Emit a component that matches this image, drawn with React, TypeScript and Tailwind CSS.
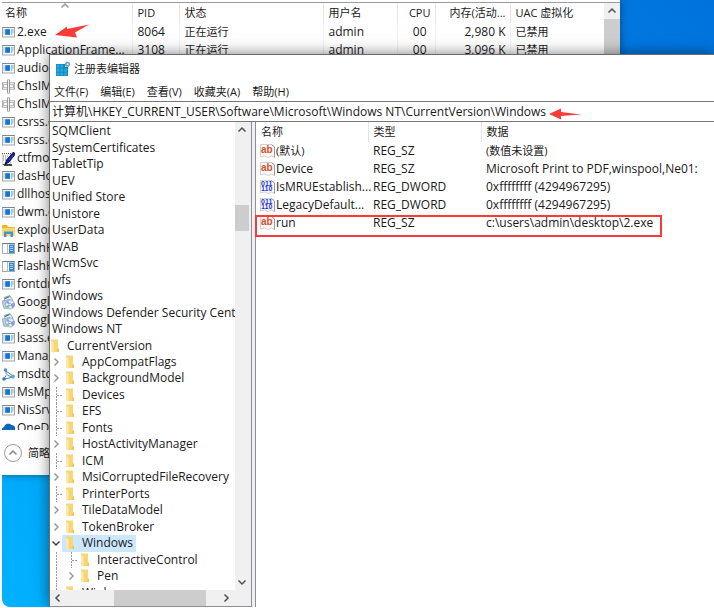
import type { ReactNode } from "react";
import clsx from "clsx";

type IconName = "app" | "ime" | "pen" | "explorer" | "flash" | "installer" | "msdtc" | "cloud";

type Process = {
  icon: IconName;
  name: string;
  pid?: string;
  status?: string;
  user?: string;
  cpu?: string;
  memory?: string;
  uac?: string;
};

const PROCESSES: Process[] = [
  { icon: "app", name: "2.exe", pid: "8064", status: "正在运行", user: "admin", cpu: "00", memory: "2,980 K", uac: "已禁用" },
  { icon: "app", name: "ApplicationFrame...", pid: "3108", status: "正在运行", user: "admin", cpu: "00", memory: "3,096 K", uac: "已禁用" },
  { icon: "app", name: "audiodg.exe" },
  { icon: "ime", name: "ChsIME.exe" },
  { icon: "ime", name: "ChsIME.exe" },
  { icon: "app", name: "csrss.exe" },
  { icon: "app", name: "csrss.exe" },
  { icon: "pen", name: "ctfmon.exe" },
  { icon: "app", name: "dasHost.exe" },
  { icon: "app", name: "dllhost.exe" },
  { icon: "app", name: "dwm.exe" },
  { icon: "explorer", name: "explorer.exe" },
  { icon: "flash", name: "FlashHelper.exe" },
  { icon: "flash", name: "FlashHelper.exe" },
  { icon: "app", name: "fontdrvhost.exe" },
  { icon: "installer", name: "GoogleUpdate.exe" },
  { icon: "installer", name: "GoogleUpdate.exe" },
  { icon: "app", name: "lsass.exe" },
  { icon: "app", name: "Management.exe" },
  { icon: "msdtc", name: "msdtc.exe" },
  { icon: "app", name: "MsMpEng.exe" },
  { icon: "app", name: "NisSrv.exe" },
  { icon: "cloud", name: "OneDrive.exe" },
];

type TreeNode = { name: string; level: 0 | 1 | 2 | 3; toggle?: "open" | "closed"; selected?: boolean };

const TREE: TreeNode[] = [
  { name: "SQMClient", level: 0 },
  { name: "SystemCertificates", level: 0 },
  { name: "TabletTip", level: 0 },
  { name: "UEV", level: 0 },
  { name: "Unified Store", level: 0 },
  { name: "Unistore", level: 0 },
  { name: "UserData", level: 0 },
  { name: "WAB", level: 0 },
  { name: "WcmSvc", level: 0 },
  { name: "wfs", level: 0 },
  { name: "Windows", level: 0 },
  { name: "Windows Defender Security Center", level: 0 },
  { name: "Windows NT", level: 0 },
  { name: "CurrentVersion", level: 1 },
  { name: "AppCompatFlags", level: 2, toggle: "closed" },
  { name: "BackgroundModel", level: 2, toggle: "closed" },
  { name: "Devices", level: 2 },
  { name: "EFS", level: 2 },
  { name: "Fonts", level: 2 },
  { name: "HostActivityManager", level: 2, toggle: "closed" },
  { name: "ICM", level: 2 },
  { name: "MsiCorruptedFileRecovery", level: 2, toggle: "closed" },
  { name: "PrinterPorts", level: 2 },
  { name: "TileDataModel", level: 2, toggle: "closed" },
  { name: "TokenBroker", level: 2, toggle: "closed" },
  { name: "Windows", level: 2, toggle: "open", selected: true },
  { name: "InteractiveControl", level: 3 },
  { name: "Pen", level: 3, toggle: "closed" },
  { name: "Winlogon", level: 2 },
];

const VALUES = [
  { name: "(默认)", type: "REG_SZ", data: "(数值未设置)" },
  { name: "Device", type: "REG_SZ", data: "Microsoft Print to PDF,winspool,Ne01:" },
  { name: "IsMRUEstablish...", type: "REG_DWORD", data: "0xffffffff (4294967295)" },
  { name: "LegacyDefault...", type: "REG_DWORD", data: "0xffffffff (4294967295)" },
  { name: "run", type: "REG_SZ", data: "c:\\users\\admin\\desktop\\2.exe" },
];

const MENU = ["文件(F)", "编辑(E)", "查看(V)", "收藏夹(A)", "帮助(H)"];

const ICONS: Record<IconName, ReactNode> = {
  app: (
    <>
      <rect x="0.500" y="2.500" width="12" height="9.500" fill="#f8f8f8" stroke="#a3a8ac" />
      <path d="M0.500 2.500h12" stroke="#7f868b" />
      <path d="M1.500 5h1M1.500 7h1M1.500 9h1" stroke="#8b8b8b" />
      <path d="M9 5h2.500M9 7h2.500M9 9h1.500" stroke="#4f93cf" />
      <rect x="3.200" y="4.200" width="4.800" height="5.600" fill="#0a78d7" />
    </>
  ),
  ime: (
    <>
      <path d="M1 4.500h11v5H1z" fill="#fff" stroke="#858585" strokeWidth="2.200" />
      <path d="M1 4.500h11v5H1z" fill="none" stroke="#f2f2f2" strokeWidth="0.900" />
      <path d="M6.500 0.500v14" stroke="#858585" strokeWidth="2.600" />
      <path d="M6.500 1v13" stroke="#f2f2f2" strokeWidth="1" />
    </>
  ),
  pen: (
    <>
      <path d="M0 2.500h9l-1 11H0z" fill="#fff" stroke="#555" strokeDasharray="1 1" />
      <path d="M1 5h6M1 7h4M1 9h4" stroke="#777" strokeDasharray="1 1" />
      <path d="M11.500 1 5 8.500 3 13l3.500-1.500L13 3.500z" fill="#1322ae" stroke="#05083f" />
      <path d="M11 4 7 9" stroke="#3850d5" />
      <path d="M2 14h8" stroke="#111" strokeWidth="1.500" />
    </>
  ),
  explorer: (
    <>
      <path d="M0 2h5l1 2h7v9H0z" fill="#efb530" />
      <path d="M0 5h13v8H0z" fill="#ffd667" />
      <path d="M2 14V8.500h9V14H8.500v-3h-4v3z" fill="#3a96d9" />
    </>
  ),
  flash: (
    <>
      <rect x="0.500" y="2.500" width="12" height="10" fill="#fff" stroke="#a8adb1" />
      <path d="M0.500 2.500h12" stroke="#70777c" />
      <rect x="7" y="3.500" width="5" height="8.500" fill="#2e8cda" />
      <path d="M8 5.500h3M8 7.500h3M8 9.500h3" stroke="#a5d0f2" />
      <path d="M5.500 3v9" stroke="#b7bcc0" />
    </>
  ),
  installer: (
    <>
      <path d="M2 2.500 8 0.500l3 5-7 3z" fill="#e6eef6" stroke="#6f87a0" strokeWidth="0.700" />
      <path d="M3 3.500 7.500 1.500" stroke="#2f7f40" strokeWidth="1.200" />
      <path d="M0 6 8 4.500v8L2 13.500z" fill="#b5cfe8" stroke="#7f9bb5" strokeWidth="0.700" />
      <circle cx="8" cy="9.500" r="4.500" fill="#e6edfb" stroke="#8a9fd0" strokeWidth="0.800" />
      <path d="M8 9.500 12 7.500a4.300 4.300 0 0 1-1.500 5.700z" fill="#8f9ae6" />
      <path d="M8 9.500 4.200 8a4.300 4.300 0 0 1 2-2.500z" fill="#8fa0e6" />
      <path d="M8 9.500 4 11a4.300 4.300 0 0 0 2.500 2.500z" fill="#76cc7c" />
      <circle cx="8" cy="9.500" r="1.200" fill="#fff" stroke="#7a86a8" strokeWidth="0.600" />
    </>
  ),
  msdtc: (
    <>
      <path d="M3.500 3 4.500 8M4.500 8 2 11.500M4.500 8l6 2M3 12l8-2M4 4l7 5" stroke="#4788a8" strokeWidth="1" />
      <circle cx="3.500" cy="3" r="1.800" fill="#4792ba" />
      <circle cx="2" cy="12" r="1.800" fill="#3e7e9d" />
      <circle cx="11" cy="9.500" r="1.900" fill="#5faad0" />
      <circle cx="5" cy="8" r="1.300" fill="#abd4e8" />
    </>
  ),
  cloud: (
    <>
      <path d="M0 11a4 4 0 0 1 2-5A4.500 4.500 0 0 1 9.500 4 4.500 4.500 0 0 1 13 11z" fill="#0d67b8" />
      <path d="M5 12c1-3 3-4 5-3.500l3 1.500v2z" fill="#1b8be0" />
    </>
  ),
};

function ProcessIcon({ name }: { name: IconName }) {
  return (
    <svg className="h-[15px] w-[13px] shrink-0" viewBox="0 0 13 15" fill="none" aria-hidden="true">
      {ICONS[name]}
    </svg>
  );
}

function RegeditIcon() {
  return (
    <svg className="size-4 shrink-0" viewBox="0 0 16 16" aria-hidden="true">
      <path d="M1 3h9v3h3v9H1z" fill="#1184b4" />
      <path d="M1.500 3.500h3v3.300h-3zM5.300 3.500h3v3.300h-3zM1.500 7.500h3v3.300h-3zM5.300 7.500h3v3.300h-3zM9.200 7.500h3v3.300h-3zM1.500 11.500h3v3h-3zM5.300 11.500h3v3h-3zM9.200 11.500h3v3h-3z" fill="#27a9df" />
      <path d="m12 0.500 2.500 1 0.800 2-1.200 2-2.400 0.500-1.700-1.500 0-2.500z" fill="#5aa9cc" />
      <circle cx="12.600" cy="3.200" r="1" fill="#e4f6ff" />
    </svg>
  );
}

function ValueIcon({ type }: { type: string }) {
  const binary = type === "REG_DWORD";
  return (
    <svg className="h-4 w-[15px] shrink-0" viewBox="0 0 15 16" aria-hidden="true">
      <path d="M0.500 1.500h11l3 2.500v10.500l-3-1.500-3 1.500-4-1.500-4 1z" fill="#f8f8f8" stroke="#d0d0d0" />
      <path d="M11.500 1.500 14.500 4v10.500" fill="none" stroke="#9a9a9a" />
      {binary ? (
        <g fill="#2535d5" fontFamily="Liberation Sans, sans-serif" fontSize="7" fontWeight="700">
          <text x="1" y="7">011</text>
          <text x="1" y="12">110</text>
        </g>
      ) : (
        <text x="1" y="10" fill="#d9512f" fontFamily="Liberation Sans, sans-serif" fontSize="10" fontWeight="700">
          ab
        </text>
      )}
    </svg>
  );
}

function FolderIcon() {
  return (
    <svg className="h-[14px] w-2 shrink-0" viewBox="0 0 8 14" aria-hidden="true">
      <path d="M0 0.500h7V10h1v3H0z" fill="#f8d575" />
      <path d="M0 1.500 2.500 3v11L0 12.500z" fill="#fde9ab" />
      <path d="M6.500 9.500H8V13H6.500z" fill="#f0c250" />
    </svg>
  );
}

const CHEVRONS = {
  up: "M1.500 6.500 5 3l3.500 3.500",
  down: "M1.500 3.500 5 7l3.500-3.500",
  left: "M6.500 1.500 3 5l3.500 3.500",
  right: "M3.500 1.500 7 5 3.500 8.500",
};

function Chevron({ to, className }: { to: keyof typeof CHEVRONS; className?: string }) {
  return (
    <svg className={clsx("size-[10px] shrink-0", className)} viewBox="0 0 10 10" fill="none" aria-hidden="true">
      <path d={CHEVRONS[to]} stroke="currentColor" strokeWidth="1.500" />
    </svg>
  );
}

function Arrow({ className, d, viewBox }: { className: string; d: string; viewBox: string }) {
  return (
    <svg className={className} viewBox={viewBox} aria-hidden="true">
      <path d={d} fill="#fb3b38" />
    </svg>
  );
}

// Dotted connector drawn beside a tree row
function Guide({ branch }: { branch?: boolean }) {
  return (
    <svg className="h-full w-3 shrink-0" aria-hidden="true">
      <line x1="6.500" y1="0" x2="6.500" y2="100%" stroke="#9a9a9a" strokeDasharray="2 1" />
      {branch && <line x1="7" y1="8.500" x2="12" y2="8.500" stroke="#9a9a9a" strokeDasharray="2 1" />}
    </svg>
  );
}

const INDENT = ["pl-[2px]", "pl-px", "pl-0", "pl-0"];

function TreeRow({ node }: { node: TreeNode }) {
  return (
    <li
      role="treeitem"
      aria-selected={!!node.selected}
      className={clsx("flex min-h-0 items-center whitespace-nowrap", INDENT[node.level])}
    >
      {node.level === 3 && (
        <span className="flex h-full w-[15px]">
          <Guide />
        </span>
      )}
      {node.level >= 2 &&
        (node.toggle ? (
          <button
            type="button"
            aria-label={node.name}
            className={clsx("flex w-3 justify-center", node.toggle === "open" ? "text-[#404040]" : "text-[#9a9a9a]")}
          >
            <Chevron to={node.toggle === "open" ? "down" : "right"} />
          </button>
        ) : (
          <Guide branch />
        ))}
      <span
        className={clsx(
          "flex h-full items-center gap-2",
          node.level >= 2 && "pl-1",
          node.selected && "bg-[#cce8ff] pr-[3px]",
        )}
      >
        {node.level > 0 && <FolderIcon />}
        {node.name}
      </span>
    </li>
  );
}

function TaskManager() {
  return (
    <section className="absolute top-0 left-0 w-[618px] bg-white pt-[2px] shadow-[0_0_8px_rgba(0,0,0,0.4)]">
      <div className="flex h-[428px] overflow-hidden border-t border-[#9c9c9c]">
        <div className="min-w-0 flex-1">
          <table className="w-full table-fixed border-collapse whitespace-nowrap">
            <colgroup>
              <col className="w-[130px]" />
              <col className="w-[47px]" />
              <col className="w-[144px]" />
              <col className="w-[74px]" />
              <col className="w-[38px]" />
              <col className="w-[75px]" />
              <col />
            </colgroup>
            <thead>
              <tr className="h-5 text-left text-[11px] *:border-r *:border-[#e5e5e5] *:p-0 *:font-normal *:last:border-r-0">
                <th>
                  <span className="relative flex pl-[3px]">
                    名称
                    <Chevron to="up" className="absolute -top-1 left-[58px] text-[#999]" />
                  </span>
                </th>
                <th><span className="pl-[5px]">PID</span></th>
                <th><span className="pl-[5px]">状态</span></th>
                <th><span className="pl-[5px]">用户名</span></th>
                <th className="text-right"><span className="pr-1">CPU</span></th>
                <th className="text-right"><span className="pr-1">内存(活动...</span></th>
                <th><span className="pl-[5px]">UAC 虚拟化</span></th>
              </tr>
            </thead>
            <tbody>
              {PROCESSES.map((p, i) => (
                <tr key={i} className="h-[18px] *:border-r *:border-[#eef3f8] *:p-0 *:last:border-r-0">
                  <td>
                    <span className="flex h-[18px] items-center gap-[2px]">
                      <ProcessIcon name={p.icon} />
                      {p.name}
                    </span>
                  </td>
                  <td><span className="pl-[5px]">{p.pid}</span></td>
                  <td className="text-[11px]"><span className="pl-[5px]">{p.status}</span></td>
                  <td><span className="pl-[5px]">{p.user}</span></td>
                  <td className="text-right"><span className="pr-2">{p.cpu}</span></td>
                  <td className="text-right"><span className="pr-1">{p.memory}</span></td>
                  <td className="text-[11px]"><span className="pl-[5px]">{p.uac}</span></td>
                </tr>
              ))}
            </tbody>
          </table>
        </div>
        <div className="flex w-4 flex-col bg-[#f0f0f0]">
          <button type="button" aria-label="向上滚动" className="flex h-4 items-center justify-center text-[#505050]">
            <Chevron to="up" />
          </button>
          <div className="h-[300px] bg-[#cdcdcd]" />
        </div>
      </div>
      <div className="flex h-[45px] items-center text-[11px]">
        <button type="button" className="flex items-center gap-[6px] pl-[2px]">
          <span className="flex size-[18px] items-center justify-center rounded-full border border-[#9b9b9b] text-[#888]">
            <Chevron to="up" />
          </span>
          简略信息(D)
        </button>
      </div>
    </section>
  );
}

function RegistryEditor() {
  return (
    <section className="absolute top-[54px] right-0 left-[47px] border-t border-l border-[#6b6b6b] bg-white shadow-[0_0_14px_rgba(0,0,0,0.5)]">
      <header className="flex h-7 items-center gap-[3px] pl-[5px] text-[11px]">
        <RegeditIcon />
        <h1>注册表编辑器</h1>
      </header>
      <nav className="flex h-[18px] items-center gap-3 pl-1 text-[11px]">
        {MENU.map((item) => (
          <button key={item} type="button">
            {item}
          </button>
        ))}
      </nav>
      <div className="flex h-[21px] items-center border-y border-[#777]">
        <input
          aria-label="地址"
          className="w-full bg-transparent pl-[2px] outline-none"
          defaultValue="计算机\HKEY_CURRENT_USER\Software\Microsoft\Windows NT\CurrentVersion\Windows"
        />
      </div>
      <div className="flex bg-[#f0f0f0]">
        <div className="w-[202px] border-r border-b border-[#8c8f96]">
          <div className="flex h-[468px]">
            <div className="min-w-0 flex-1 overflow-hidden bg-white pt-px">
              <ul role="tree" className="grid h-[478px] auto-rows-fr">
                {TREE.map((node, i) => (
                  <TreeRow key={i} node={node} />
                ))}
              </ul>
            </div>
            <div className="flex w-4 flex-col justify-between pr-[2px]">
              <button type="button" aria-label="向上滚动" className="flex h-4 items-center justify-center text-[#505050]">
                <Chevron to="up" />
              </button>
              <div className="flex-1 pt-[67px]">
                <div className="h-[26px] bg-[#cdcdcd]" />
              </div>
              <button type="button" aria-label="向下滚动" className="flex h-4 items-center justify-center text-[#505050]">
                <Chevron to="down" />
              </button>
            </div>
          </div>
          <div className="flex h-4 pr-[17px]">
            <button type="button" aria-label="向左滚动" className="flex w-4 items-center justify-center text-[#505050]">
              <Chevron to="left" />
            </button>
            <div className="flex-1 pl-12">
              <div className="h-full w-[92px] bg-[#cdcdcd]" />
            </div>
            <button type="button" aria-label="向右滚动" className="flex w-4 items-center justify-center text-[#505050]">
              <Chevron to="right" />
            </button>
          </div>
        </div>
        <div className="relative ml-[3px] min-w-0 flex-1 border-l border-[#8c8f96] bg-white">
          <table className="w-full table-fixed border-collapse whitespace-nowrap">
            <colgroup>
              <col className="w-28" />
              <col className="w-[113px]" />
              <col />
            </colgroup>
            <thead>
              <tr className="h-5 text-left text-[11px] *:border-r *:border-[#e5e5e5] *:p-0 *:font-normal *:last:border-r-0">
                <th><span className="pl-[5px]">名称</span></th>
                <th><span className="pl-[5px]">类型</span></th>
                <th><span className="pl-[5px]">数据</span></th>
              </tr>
            </thead>
            <tbody>
              {VALUES.map((v, i) => (
                <tr key={v.name} className={clsx("h-[18px] *:p-0", i === 0 && "text-[11px]")}>
                  <td>
                    <span className="flex h-[18px] items-center gap-px pl-1">
                      <ValueIcon type={v.type} />
                      {v.name}
                    </span>
                  </td>
                  <td className="text-[12px]"><span className="pl-[5px]">{v.type}</span></td>
                  <td><span className="pl-[5px]">{v.data}</span></td>
                </tr>
              ))}
            </tbody>
          </table>
          <div className="absolute top-[93px] -left-px h-[22px] w-[407px] border-2 border-[#f83a3a]" />
        </div>
      </div>
    </section>
  );
}

export default function App() {
  return (
    <main className="min-h-screen bg-white pb-px pl-[2px] font-['Open_Sans','Noto_Sans_CJK_SC',sans-serif] text-[12px] leading-4 text-[#1a1a1a]">
      <div className="relative min-h-[607px] overflow-hidden rounded-bl-lg bg-linear-to-bl from-[#0072dc] via-[#0091f0] to-[#00b2ff]">
        <TaskManager />
        <RegistryEditor />
        <Arrow
          className="absolute top-6 left-[53px] h-[14px] w-[34px]"
          viewBox="0 0 34 14"
          d="M0 11 12 2.500 12 5 34 0.500 20 8.500 22 13.500z"
        />
        <Arrow
          className="absolute top-[108px] left-[547px] h-3 w-8"
          viewBox="0 0 32 12"
          d="M0 6 12 0.500V4L32 6.500 12 8v3.500z"
        />
      </div>
    </main>
  );
}
